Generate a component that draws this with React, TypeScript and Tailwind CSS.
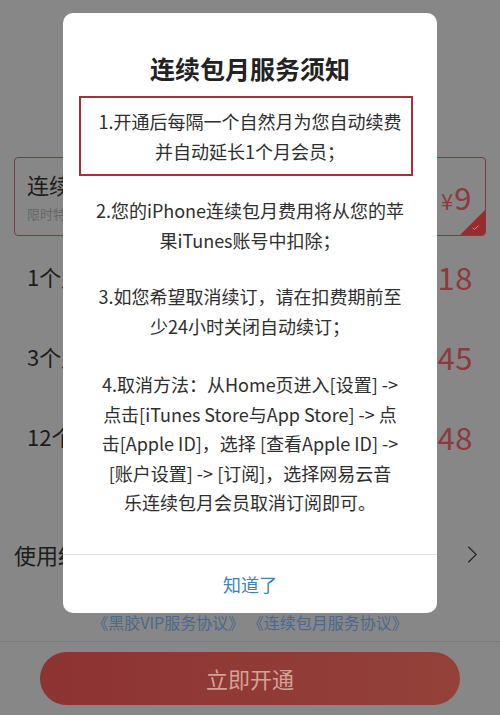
import React from 'react';

// ─── Underlying purchase page (dimmed) ───────────────────────────────────────

const plans = [
  { name: '1个月', price: '18', gap: false },
  { name: '3个月', price: '45', gap: true },
  { name: '12个月', price: '48', gap: true },
];

function Price({ value, gap }: { value: string; gap?: boolean }) {
  return (
    <div className="flex items-baseline text-[#8c3a3d]">
      <span className={`text-[22px] leading-none ${gap ? 'mr-[14px]' : 'mr-[1px]'}`}>¥</span>
      <span className="text-[31px] leading-none tracking-[0.5px]">{value}</span>
    </div>
  );
}

function Page() {
  return (
    <div className="px-[14px] pt-[157px]">
      {/* Selected plan */}
      <div className="relative h-[79px] rounded-[4px] border-[1.5px] border-[#7b3d44] flex items-center justify-between pl-[12px] pr-[13px] overflow-hidden">
        <div>
          <div className="text-[22px] leading-[26px] text-[#1c1c1c]">连续包月</div>
          <div className="mt-[8px] text-[13px] leading-[18px] text-[#676767]">限时特惠</div>
        </div>
        <Price value="9" />
        <div className="absolute right-0 bottom-0 w-[25px] h-[25px] bg-[#9b2a2f] [clip-path:polygon(100%_0,100%_100%,0_100%)]">
          <svg viewBox="0 0 24 24" className="absolute right-[2px] bottom-[2px] w-[12px] h-[12px]">
            <polyline points="3,13 7,17 15,9" fill="none" stroke="#d8a2a2" strokeWidth="1.6" />
          </svg>
        </div>
      </div>

      {/* Other plans */}
      {plans.map((p) => (
        <div key={p.name} className="h-[80px] flex items-center justify-between pl-[13px] pr-[13px]">
          <span className="text-[22px] text-[#1c1c1c]">{p.name}</span>
          <Price value={p.price} gap={p.gap} />
        </div>
      ))}

      {/* Coupon row */}
      <div className="mt-[38px] h-[80px] flex items-center justify-between pr-[8px]">
        <span className="text-[22px] text-[#1c1c1c]">使用红包抵扣</span>
        <svg viewBox="0 0 12 20" className="w-[11px] h-[19px]">
          <polyline points="1.5,1.5 10,10 1.5,18.5" fill="none" stroke="#222" strokeWidth="1.3" />
        </svg>
      </div>

      <div className="mt-[17px] text-center text-[16px] leading-[22px] text-[#4a6a8c] whitespace-nowrap">
        《黑胶VIP服务协议》 《连续包月服务协议》
      </div>
      <div className="mt-[8px] -mx-[14px] border-t border-[#7c7c7c]" />

      <button className="mt-[10px] mx-[26px] w-[420px] h-[53px] rounded-full bg-gradient-to-r from-[#8d3332] to-[#94413a] text-[22px] text-[#d4a199]">
        立即开通
      </button>
    </div>
  );
}

// ─── Notice dialog ────────────────────────────────────────────────────────────

function Lines({ lines }: { lines: string[] }) {
  return (
    <>
      {lines.map((l, i) => (
        <span key={i} className="block whitespace-nowrap">
          {l}
        </span>
      ))}
    </>
  );
}

function NoticeDialog() {
  return (
    <div className="absolute left-[63px] top-[13px] w-[374px] h-[600px] bg-white rounded-[10px] flex flex-col">
      <div className="flex-1 pt-[38px] text-[#2e2e2e]">
        <h2 className="text-center text-[25px] leading-[34px] font-bold text-[#222]">连续包月服务须知</h2>

        <div className="mt-[11px] ml-[16px] mr-[24px] border-2 border-[#a3313c] py-[8px] pl-[10px] pr-[2px] text-center text-[18px] leading-[30px]">
          <Lines lines={['1.开通后每隔一个自然月为您自动续费', '并自动延长1个月会员；']} />
        </div>

        <div className="mt-[20px] text-center text-[18px] leading-[29.5px]">
          <Lines lines={['2.您的iPhone连续包月费用将从您的苹', '果iTunes账号中扣除；']} />
        </div>

        <div className="mt-[27px] text-center text-[18px] leading-[29.5px]">
          <Lines lines={['3.如您希望取消续订，请在扣费期前至', '少24小时关闭自动续订；']} />
        </div>

        <div className="mt-[29px] text-center text-[18px] leading-[29.5px]">
          <Lines
            lines={[
              '4.取消方法：从Home页进入[设置] ->',
              '点击[iTunes Store与App Store] -> 点',
              '击[Apple ID]，选择 [查看Apple ID] ->',
              '[账户设置] -> [订阅]，选择网易云音',
              '乐连续包月会员取消订阅即可。',
            ]}
          />
        </div>
      </div>

      <div className="h-[59px] border-t border-[#e1e1e1] flex items-center justify-center text-[18px] text-[#3a85b6]">
        知道了
      </div>
    </div>
  );
}

export default function App() {
  return (
    <div className="relative w-[500px] h-[715px] overflow-hidden bg-[#878787] font-['Noto_Sans_CJK_SC','Noto_Sans',sans-serif]">
      <Page />
      <NoticeDialog />
    </div>
  );
}
